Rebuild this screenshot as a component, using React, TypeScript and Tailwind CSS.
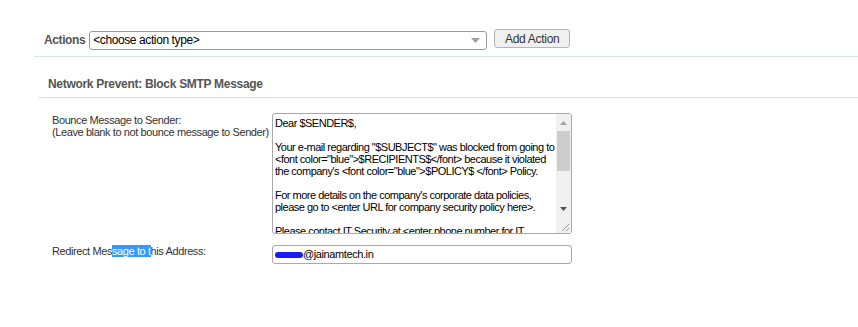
import React from 'react';

const bodyLines = [
  'Dear $SENDER$,',
  '',
  'Your e-mail regarding "$SUBJECT$" was blocked from going to',
  '<font color="blue">$RECIPIENTS$</font> because it violated',
  'the company\'s <font color="blue">$POLICY$ </font> Policy.',
  '',
  'For more details on the company\'s corporate data policies,',
  'please go to <enter URL for company security policy here>.',
  '',
  'Please contact IT Security at <enter phone number for IT',
];

function FakeTextarea() {
  return (
    <div className="relative w-[300px] h-[121px] border border-[#a9a9a9] rounded-[3px] bg-white overflow-hidden flex">
      <div className="flex-1 pl-[2px] pt-[3px] text-[11px] leading-[12px] tracking-[-0.5px] text-black whitespace-pre overflow-hidden">
        {bodyLines.map((l, i) => (
          <div key={i} className="h-[12px]">
            {l || ' '}
          </div>
        ))}
      </div>
      <div className="w-[15px] shrink-0 bg-[#f0f0f0] flex flex-col items-center">
        <div className="h-[17px] w-full flex items-center justify-center">
          <svg width="7" height="4" viewBox="0 0 7 4">
            <path d="M0 4 L3.5 0 L7 4 Z" fill="#a3a3a3" />
          </svg>
        </div>
        <div className="w-[13px] h-[40px] bg-[#cdcdcd]" />
        <div className="flex-1" />
        <div className="h-[17px] w-full flex items-center justify-center">
          <svg width="7" height="4" viewBox="0 0 7 4">
            <path d="M0 0 L3.5 4 L7 0 Z" fill="#505050" />
          </svg>
        </div>
        <div className="h-[16px] w-full flex items-end justify-end pr-[1px] pb-[1px]">
          <svg width="9" height="9" viewBox="0 0 9 9">
            <path d="M8 1 L1 8 M8 5 L5 8" stroke="#9a9a9a" strokeWidth="1" />
          </svg>
        </div>
      </div>
    </div>
  );
}

export default function App() {
  return (
    <div className="w-[858px] h-[327px] bg-white text-[#333] font-['Liberation_Sans',Arial,sans-serif] overflow-hidden">
      <div className="pt-[30px] pl-[34px]">
        <div className="flex items-center pl-[10px] h-[20px]">
          <span className="text-[12px] font-bold text-[#555] tracking-[-0.4px] mr-[4px]">Actions</span>
          <div className="w-[398px] h-[19px] border border-[#999] rounded-[3px] flex items-center pl-[3px] pr-[6px] text-[12px] tracking-[-0.4px] text-black">
            <span className="flex-1">&lt;choose action type&gt;</span>
            <svg width="9" height="5" viewBox="0 0 9 5">
              <path d="M0 0 L4.5 5 L9 0 Z" fill="#a0a0a0" />
            </svg>
          </div>
          <button className="ml-[7px] -mt-[3px] w-[76px] h-[19px] border border-[#b5b5b5] rounded-[3px] bg-[#f0f0f0] text-[12px] tracking-[-0.3px] text-[#333]">
            Add Action
          </button>
        </div>
        <div className="mt-[6px] border-t border-[#d3e3ee]" />
      </div>
      <div className="pl-[38px]">
        <div className="h-[41px] flex items-end pb-[4px] pl-[10px] text-[12px] font-bold tracking-[-0.3px] text-[#555] border-b border-[#d3e3ee]">
          Network Prevent: Block SMTP Message
        </div>
      </div>
      <div className="pl-[52px] pt-[15px] text-[11px] tracking-[-0.4px] text-[#333]">
        <div className="flex">
          <div className="w-[220px] leading-[12px] pt-[1px]">
            <div>Bounce Message to Sender:</div>
            <div>(Leave blank to not bounce message to Sender)</div>
          </div>
          <FakeTextarea />
        </div>
        <div className="flex mt-[11px] items-center">
          <div className="w-[220px] leading-[13px] -mt-[6px]">
            Redirect Mes<span className="bg-[#3399ff] text-white">sage to t</span>his Address:
          </div>
          <div className="w-[300px] h-[19px] border border-[#a9a9a9] rounded-[3px] flex items-center pl-[2px] text-[11px] text-black">
            <span className="inline-block w-[28px] h-[6px] mt-[1px] bg-[#1a1aff] rounded-[3px]" />
            <span>@jainamtech.in</span>
          </div>
        </div>
      </div>
    </div>
  );
}
